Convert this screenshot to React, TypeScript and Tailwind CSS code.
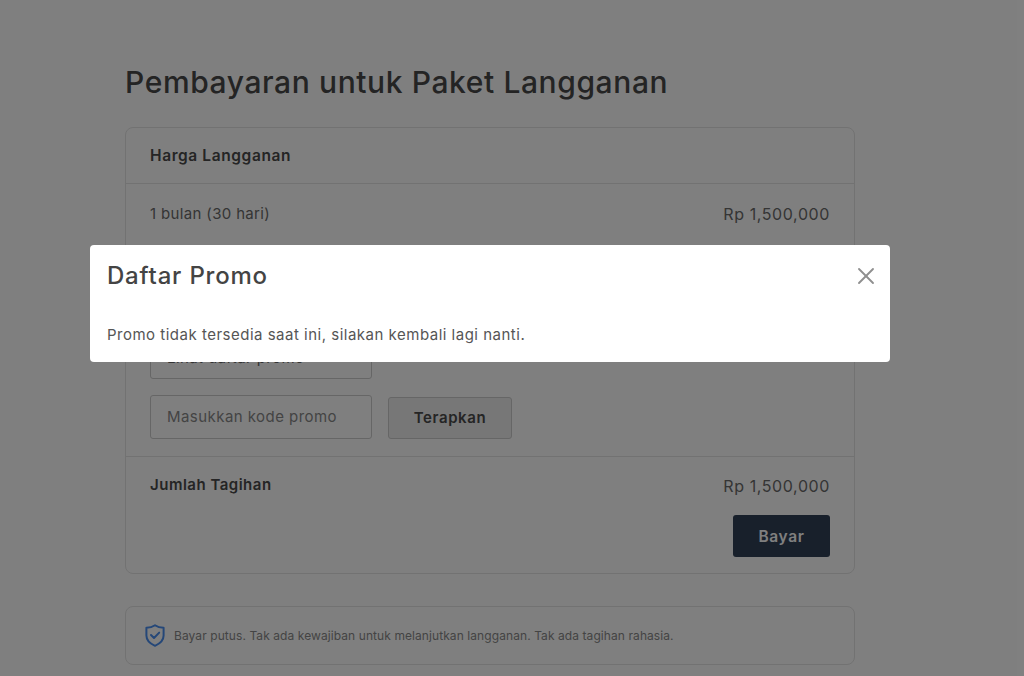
import { X } from "lucide-react";

const font = "font-['Inter','Lato',sans-serif]";

function ShieldIcon() {
  return (
    <svg width="20" height="23" viewBox="0 0 20 23" fill="none" stroke="#4a8ff0" strokeWidth="2" strokeLinejoin="round" strokeLinecap="round" className="shrink-0">
      <path d="M10 1.2 C12.5 3 15.5 3.7 18.6 3.7 V11.5 C18.6 16 15 19.6 10 21.8 C5 19.6 1.4 16 1.4 11.5 V3.7 C4.5 3.7 7.5 3 10 1.2 Z" />
      <path d="M6 11 L9 14 L14.2 8.6" />
    </svg>
  );
}

function Card() {
  return (
    <div className="mt-[27px] rounded-lg border border-[#e4e4e4]">
      <div className="flex h-[56px] items-center border-b border-[#e4e4e4] px-6 pt-[1px]">
        <span className="text-[15.5px] font-semibold tracking-[0.6px] text-[#4a4a4a]">Harga Langganan</span>
      </div>

      <div className="border-b border-[#e4e4e4] px-6 pt-[21px] pb-[17px]">
        <div className="flex items-start justify-between">
          <span className="text-[15px] leading-[18px] tracking-[0.35px] text-[#6a6a6a]">1 bulan (30 hari)</span>
          <span className="text-[16px] leading-[18px] tracking-[0.6px] text-[#6a6a6a]">Rp 1,500,000</span>
        </div>

        {/* promo section, mostly behind the modal */}
        <div className="mt-[114px] flex h-[42px] w-[222px] items-center justify-between rounded-[3px] border border-[#ccc] px-4">
          <span className="text-[15px] tracking-[0.4px] text-[#666]">Lihat daftar promo</span>
          <span className="text-[10px] text-[#666]">›</span>
        </div>
        <div className="mt-4 flex items-end gap-4">
          <div className="flex h-[44px] w-[222px] items-center rounded-[3px] border border-[#ccc] px-4">
            <span className="text-[15px] tracking-[0.45px] text-[#888]">Masukkan kode promo</span>
          </div>
          <button className="flex h-[42px] w-[124px] items-center justify-center rounded-[3px] border border-[#ccc] bg-[#eee] text-[15px] font-semibold tracking-[0.6px] text-[#4a4a4a]">
            Terapkan
          </button>
        </div>
      </div>

      <div className="px-6 pt-4 pb-4">
        <div className="flex items-start justify-between">
          <span className="mt-[2px] text-[15px] leading-[20px] font-semibold tracking-[0.5px] text-[#4a4a4a]">Jumlah Tagihan</span>
          <span className="mt-[4px] text-[16px] leading-[18px] tracking-[0.6px] text-[#6a6a6a]">Rp 1,500,000</span>
        </div>
        <div className="mt-5 flex justify-end">
          <button className="flex h-[42px] w-[97px] items-center justify-center rounded-[3px] bg-[#304056] pt-[1px] text-[15.5px] font-semibold tracking-[0.6px] text-white">
            Bayar
          </button>
        </div>
      </div>
    </div>
  );
}

function PromoModal() {
  return (
    <div className="absolute inset-0 bg-black/50 pt-[245px] pl-[90px]">
      <div className="w-[800px] rounded bg-white">
        <div className="flex h-[62px] items-center justify-between pr-[10px] pl-[17px]">
          <span className="text-[24px] font-medium tracking-[0.8px] text-[#444]">Daftar Promo</span>
          <X size={28} strokeWidth={1.6} color="#8f8f8f" />
        </div>
        <div className="h-[55px] pt-4 pl-[17px] text-[15px] leading-[24px] tracking-[0.5px] text-[#555]">
          Promo tidak tersedia saat ini, silakan kembali lagi nanti.
        </div>
      </div>
    </div>
  );
}

export default function App() {
  return (
    <div className={`relative h-[676px] w-[1024px] overflow-hidden bg-white ${font}`}>
      <div className="ml-[125px] w-[730px] pt-[63px]">
        <h1 className="h-[37px] text-[30px] leading-[38px] font-medium tracking-[0.6px] text-[#484848]">
          Pembayaran untuk Paket Langganan
        </h1>
        <Card />
        <div className="mt-8 flex h-[59px] items-center gap-[9px] rounded-lg border border-[#e4e4e4] pl-[19px]">
          <ShieldIcon />
          <span className="text-[12px] tracking-[0.08px] text-[#888]">
            Bayar putus. Tak ada kewajiban untuk melanjutkan langganan. Tak ada tagihan rahasia.
          </span>
        </div>
      </div>
      <PromoModal />
    </div>
  );
}
